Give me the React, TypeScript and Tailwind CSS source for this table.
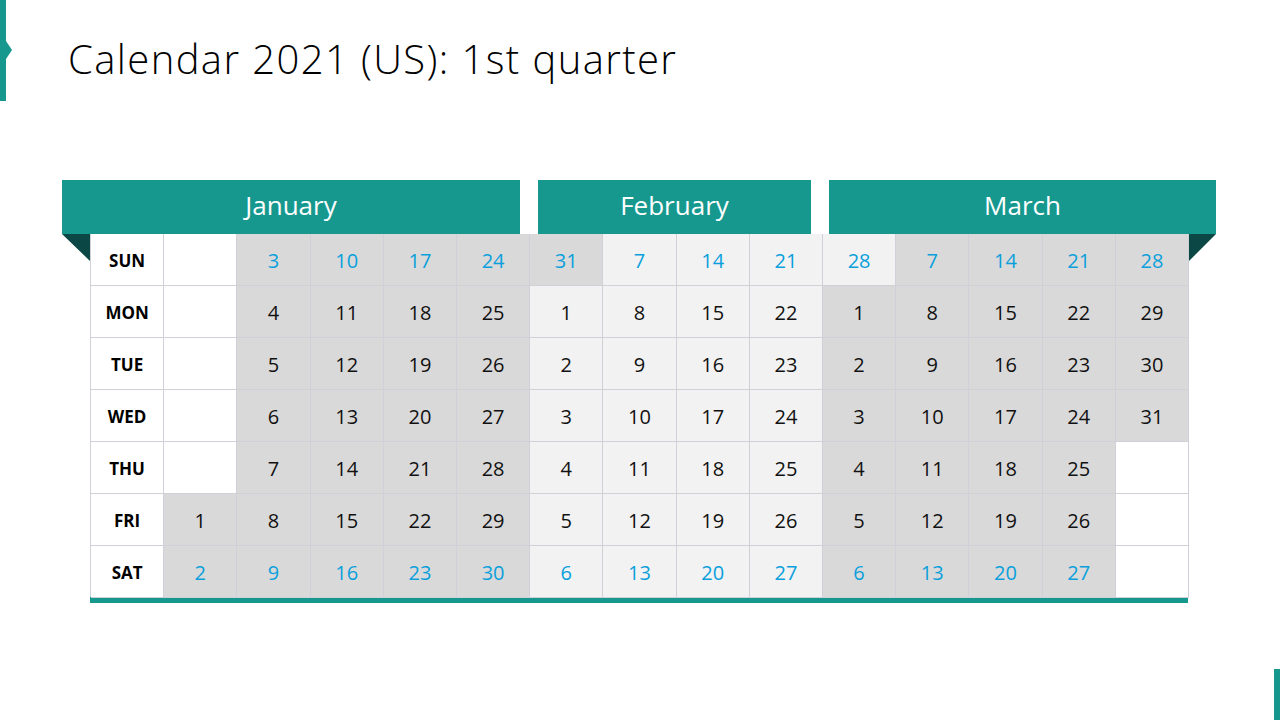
import React from 'react'

const DAYS = ['SUN', 'MON', 'TUE', 'WED', 'THU', 'FRI', 'SAT']
const MONTHS = [
  { name: 'January', w: 'w-[458px]' },
  { name: 'February', w: 'w-[273px]' },
  { name: 'March', w: 'w-[387px]' },
]

// Jan 1 2021 is a Friday -> column 0, row 5
function cellFor(col: number, row: number) {
  const d = col * 7 + row - 5
  if (d < 0 || d >= 90) return { label: '', bg: 'bg-white' }
  if (d < 31) return { label: String(d + 1), bg: 'bg-[#d9d9d9]' }
  if (d < 59) return { label: String(d - 30), bg: 'bg-[#f2f2f2]' }
  return { label: String(d - 58), bg: 'bg-[#d9d9d9]' }
}

export default function App() {
  return (
    <div className="w-[1280px] h-[720px] bg-white relative overflow-hidden" style={{ fontFamily: '"Open Sans", "Noto Sans", sans-serif' }}>
      <div className="flex items-start">
        <div className="relative w-[6px] h-[101px] bg-[#16988f]">
          <svg className="absolute left-[6px] top-[41px]" width="7" height="18" viewBox="0 0 7 18">
            <polygon points="0,0 6,9 0,18" fill="#16988f" />
          </svg>
        </div>
        <h1 className="ml-[62px] mt-[33px] text-[40px] leading-[52px] font-light text-black tracking-[1.4px]">
          Calendar 2021 (US): 1st quarter
        </h1>
      </div>

      <div className="ml-[62px] mt-[79px] w-[1154px]">
        <div className="flex gap-[18px]">
          {MONTHS.map(m => (
            <div key={m.name} className={`${m.w} h-[54px] pb-[3px] bg-[#16988f] flex items-center justify-center text-white text-[26px]`}>
              {m.name}
            </div>
          ))}
        </div>

        <div className="flex items-start">
          <svg width="28" height="27" viewBox="0 0 28 27" className="shrink-0">
            <polygon points="0,0 28,0 28,27" fill="#0b4845" />
          </svg>
          <div className="w-[1099px]">
            <div className="grid grid-cols-[repeat(15,minmax(0,1fr))] border-l border-[#d0d0d8]">
              {DAYS.map((day, r) => (
                <React.Fragment key={day}>
                  <div className="h-[52px] pt-[2px] bg-white border-r border-b border-[#d0d0d8] flex items-center justify-center text-[17px] font-bold text-black">
                    {day}
                  </div>
                  {Array.from({ length: 14 }).map((_, c) => {
                    const cell = cellFor(c, r)
                    const weekend = r === 0 || r === 6
                    return (
                      <div key={c} className={`h-[52px] pt-[2px] ${cell.bg} border-r border-b border-[#d0d0d8] flex items-center justify-center text-[20px] ${weekend ? 'text-[#0aa0dc]' : 'text-[#111]'}`}>
                        {cell.label}
                      </div>
                    )
                  })}
                </React.Fragment>
              ))}
            </div>
            <div className="h-[6px] w-[1098px] bg-[#16988f] -mt-px" />
          </div>
          <svg width="27" height="27" viewBox="0 0 27 27" className="shrink-0">
            <polygon points="0,0 27,0 0,27" fill="#0b4845" />
          </svg>
        </div>
      </div>

      <div className="absolute right-0 bottom-0 w-[6px] h-[51px] bg-[#16988f]" />
    </div>
  )
}
